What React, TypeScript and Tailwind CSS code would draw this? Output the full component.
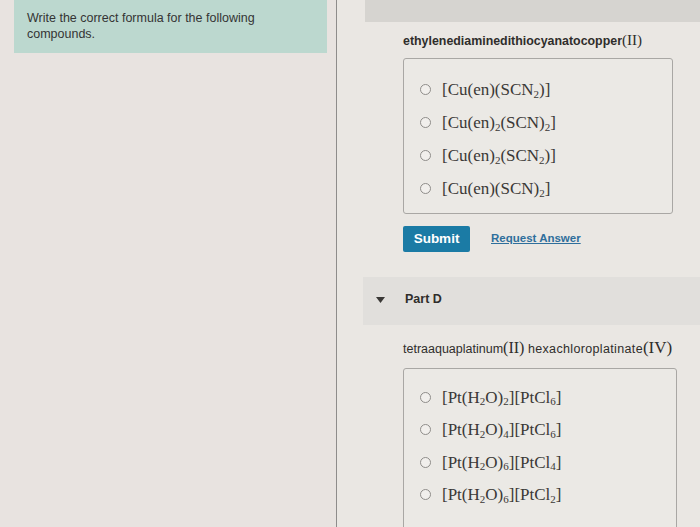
import React from "react";

const serif = { fontFamily: '"Liberation Serif", "DejaVu Serif", serif' };

function Radio() {
  return <span className="inline-block w-[11px] h-[11px] rounded-full border-[1.5px] border-[#8f8d8a] bg-[#f1efec] shrink-0" />;
}

function Opt({ children, h }: { children: React.ReactNode; h: string }) {
  return (
    <div className={`flex items-center ${h} pl-[16px]`}>
      <Radio />
      <span className="ml-[11px] text-[17px] text-[#3a3836]" style={serif}>
        {children}
      </span>
    </div>
  );
}

const S = ({ c }: { c: string }) => <sub className="text-[11px]">{c}</sub>;

export default function App() {
  return (
    <div
      className="w-[700px] h-[527px] overflow-hidden flex bg-[#e9e5e2] text-[#343230]"
      style={{ fontFamily: '"Liberation Sans", Arial, sans-serif' }}
    >
      <div className="w-[337px] shrink-0 border-r border-[#8e8c8b] pl-[14px] bg-[#e8e3e0]">
        <div className="w-[313px] h-[53px] bg-[#bcd8cf] px-[13px] pt-[10px] text-[12.5px] leading-[16px] text-[#343434]">
          Write the correct formula for the following compounds.
        </div>
      </div>
      <div className="flex-1 pl-[28px] bg-[#eae7e3]">
        <div className="h-[22px] bg-[#d6d4d0]" />
        <div className="pl-[38px] pt-[10px]">
          <div className="text-[12.4px] leading-[16px] font-semibold text-[#2f2d2b]">
            ethylenediaminedithiocyanatocopper<span style={serif} className="text-[15px] font-normal">(II)</span>
          </div>
          <div className="mt-[9px] w-[270px] border border-[#a9a7a4] rounded-[3px] pt-[14px] pb-[8px] bg-[#ebe9e5]">
            <Opt h="h-[33px]">[Cu(en)(SCN<S c="2" />)]</Opt>
            <Opt h="h-[33px]">[Cu(en)<S c="2" />(SCN)<S c="2" />]</Opt>
            <Opt h="h-[33px]">[Cu(en)<S c="2" />(SCN<S c="2" />)]</Opt>
            <Opt h="h-[33px]">[Cu(en)(SCN)<S c="2" />]</Opt>
          </div>
          <div className="mt-[12px] flex items-center">
            <div className="w-[67px] h-[26px] bg-[#1b7ba5] text-white text-[13.5px] font-bold flex items-center justify-center rounded-[2px]">
              Submit
            </div>
            <span className="ml-[21px] text-[11.5px] font-bold text-[#2f6f9c] underline">Request Answer</span>
          </div>
        </div>
        <div className="mt-[25px] -ml-[2px] h-[48px] bg-[#e1dfdc] flex items-center pl-[13px]">
          <svg width="9" height="6" viewBox="0 0 9 6" className="mt-[-2px]">
            <path d="M0 0 L9 0 L4.5 6 Z" fill="#3a3836" />
          </svg>
          <span className="ml-[20px] text-[12.5px] font-semibold text-[#2f2d2b] -mt-[3px]">Part D</span>
        </div>
        <div className="pl-[38px] pt-[15px]">
          <div className="text-[12.5px] leading-[16px] text-[#2f2d2b] whitespace-nowrap">
            tetraaquaplatinum<span style={serif} className="text-[16px]">(II)</span>{" "}
            <span className="tracking-[0.35px]">hexachloroplatinate</span>
            <span style={serif} className="text-[17px]">(IV)</span>
          </div>
          <div className="mt-[11px] w-[274px] h-[200px] border border-[#a9a7a4] rounded-[3px] pt-[12px] bg-[#ebe9e5]">
            <Opt h="h-[32.5px]">[Pt(H<S c="2" />O)<S c="2" />][PtCl<S c="6" />]</Opt>
            <Opt h="h-[32.5px]">[Pt(H<S c="2" />O)<S c="4" />][PtCl<S c="6" />]</Opt>
            <Opt h="h-[32.5px]">[Pt(H<S c="2" />O)<S c="6" />][PtCl<S c="4" />]</Opt>
            <Opt h="h-[32.5px]">[Pt(H<S c="2" />O)<S c="6" />][PtCl<S c="2" />]</Opt>
          </div>
        </div>
      </div>
    </div>
  );
}
